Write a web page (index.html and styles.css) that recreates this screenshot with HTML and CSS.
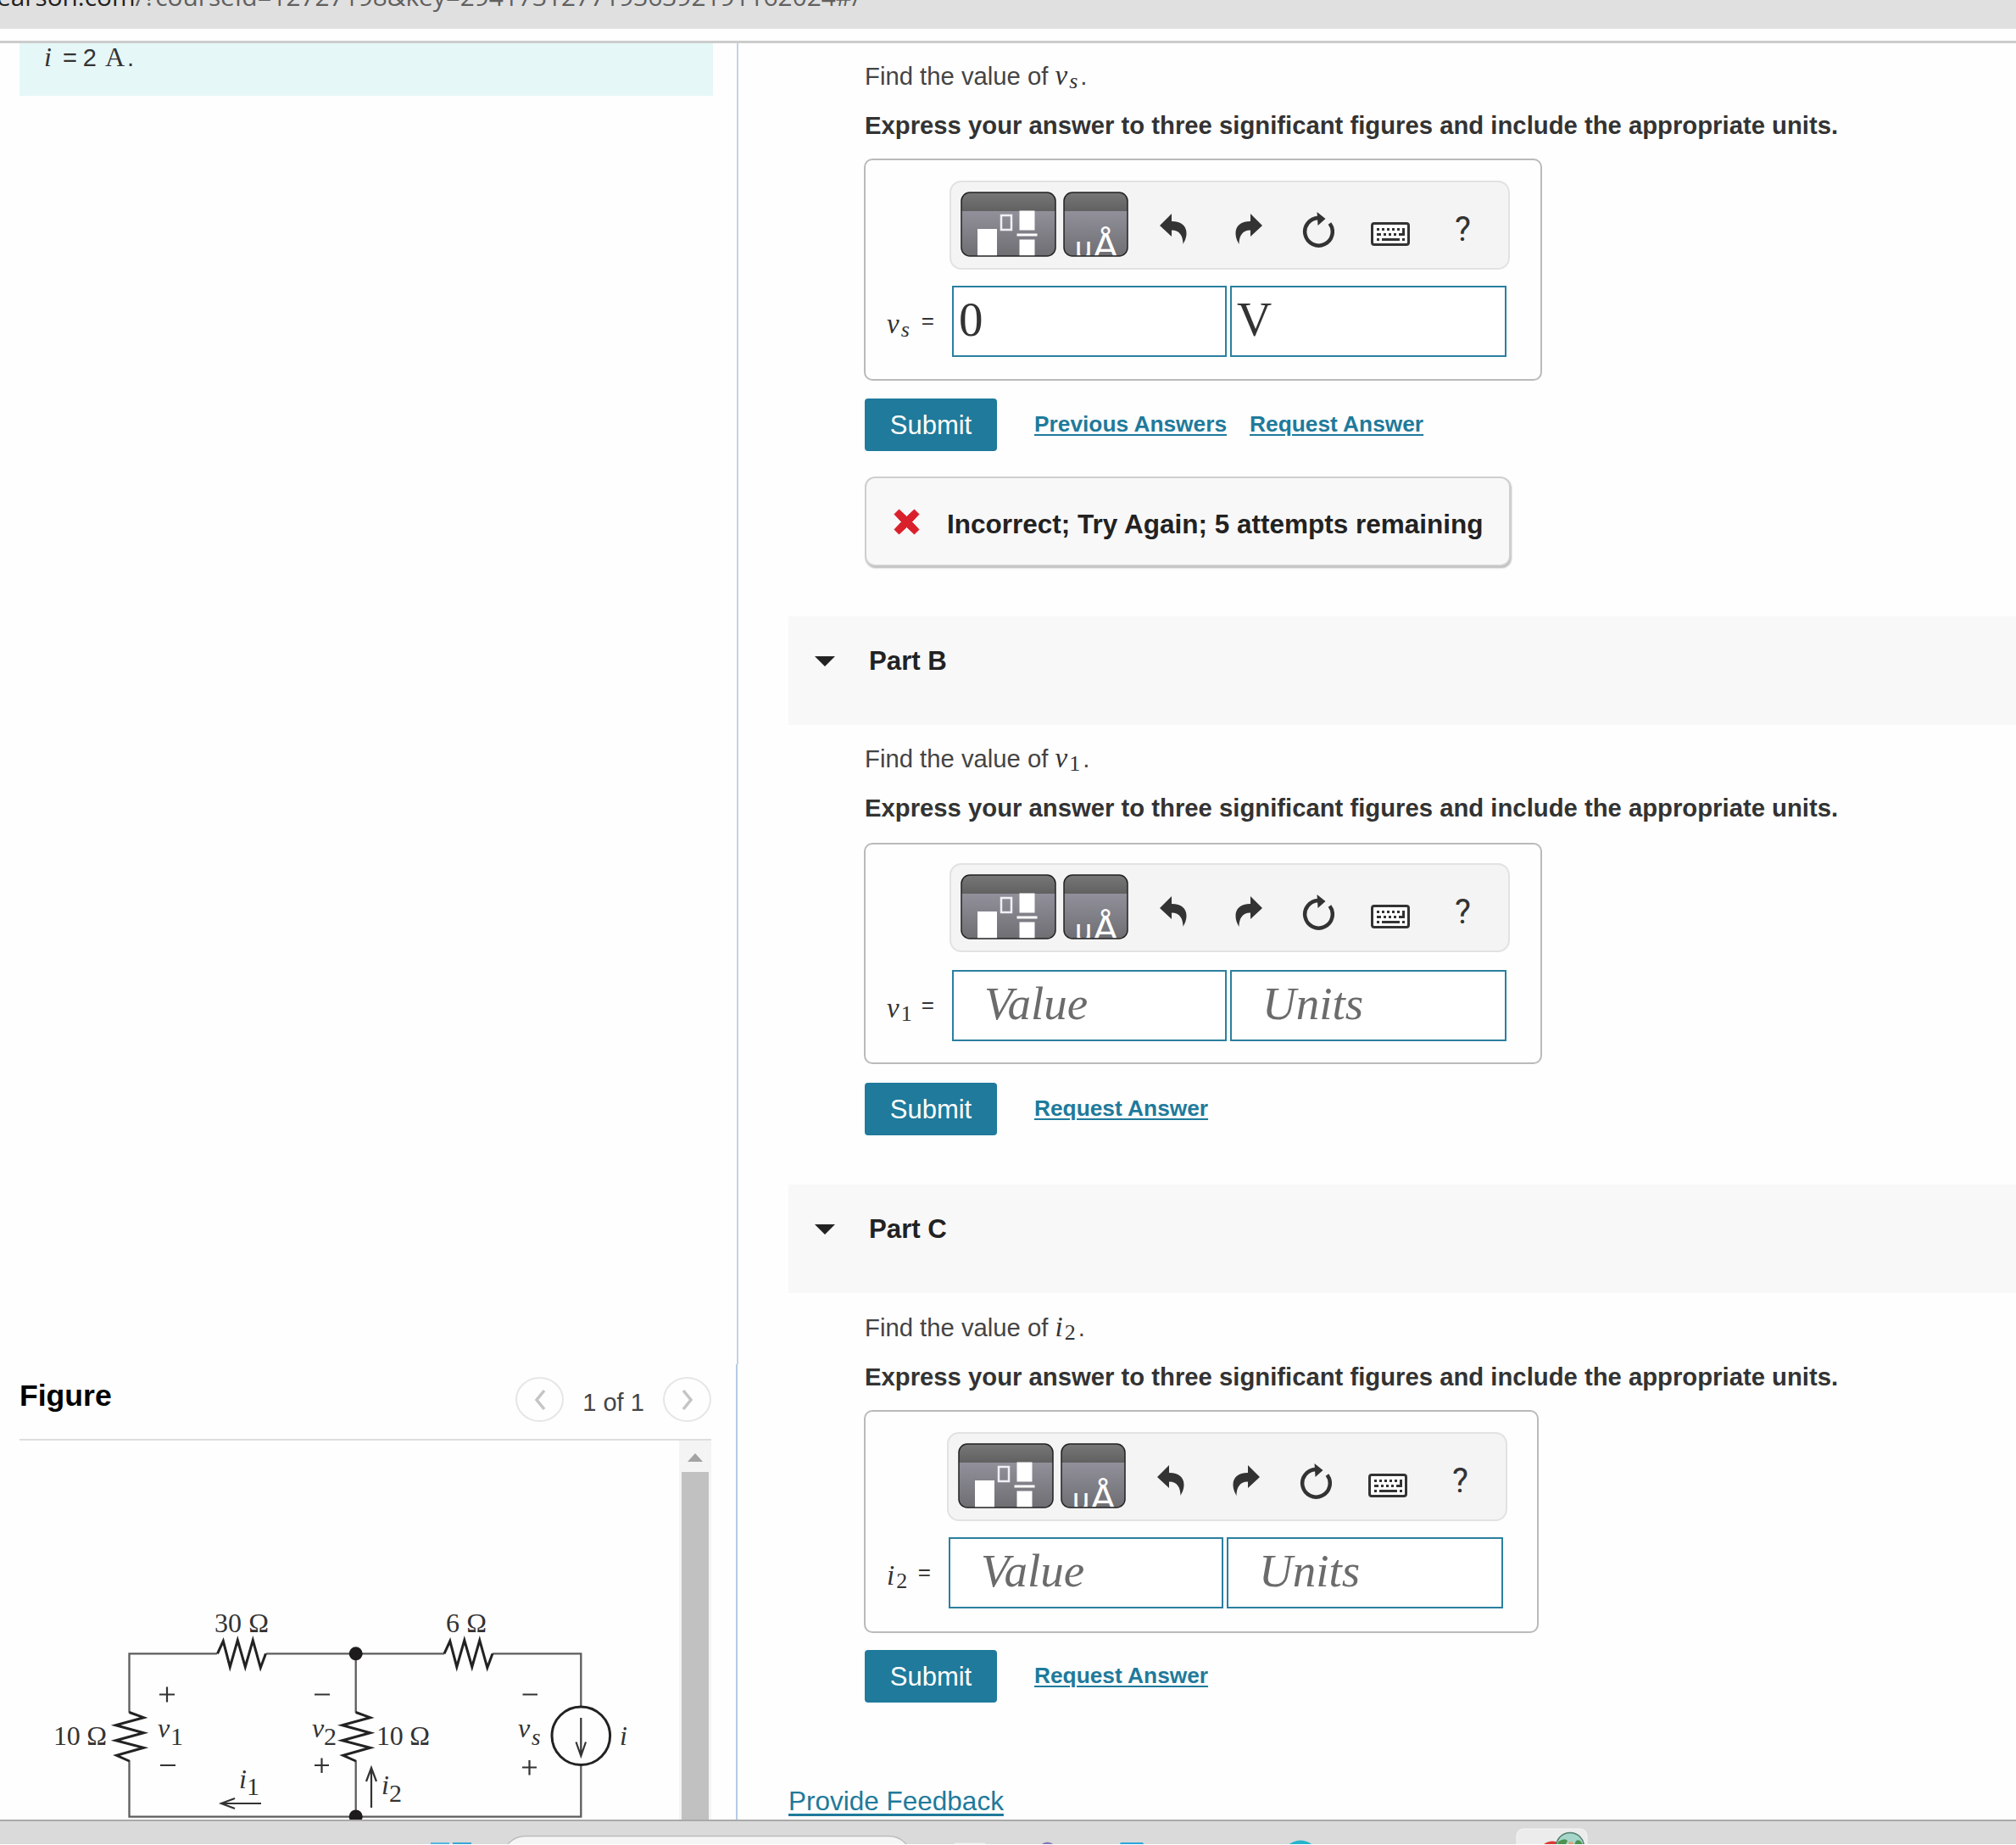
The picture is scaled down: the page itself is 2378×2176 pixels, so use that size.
FILE: index.html
```html
<!DOCTYPE html>
<html lang="en">
<head>
<meta charset="utf-8">
<title>Circuit problem</title>
<link rel="stylesheet" href="styles.css">
</head>
<body>
<svg class="defs" aria-hidden="true">
  <defs>
    <linearGradient id="cap" x1="0" y1="0" x2="0" y2="1"><stop offset="0" stop-color="#777"/><stop offset="1" stop-color="#616161"/></linearGradient>
    <linearGradient id="face" x1="0" y1="0" x2="0" y2="1"><stop offset="0" stop-color="#a09fab"/><stop offset="1" stop-color="#6e6e73"/></linearGradient>
  </defs>
  <symbol id="templates" viewBox="0 0 113 77">
    <rect x="1" y="1" width="111" height="75" rx="10" fill="url(#face)"/>
    <path d="M1 23V11A10 10 0 0 1 11 1H102A10 10 0 0 1 112 11V23Z" fill="url(#cap)"/>
    <path d="M20 44H43V76H20ZM69.500 22.500H87.500V45.500H69.500ZM69.500 56.500H87.500V76H69.500ZM66.500 49.500H90.500V52.500H66.500Z" fill="#fff"/>
    <rect x="48" y="28" width="12" height="17" fill="none" stroke="#f0eff5" stroke-width="2.500"/>
    <rect x="1" y="1" width="111" height="75" rx="10" fill="none" stroke="#222" stroke-width="1.500"/>
  </symbol>
  <symbol id="units" viewBox="0 0 77 77">
    <rect x="1" y="1" width="75" height="75" rx="10" fill="url(#face)"/>
    <path d="M1 23V11A10 10 0 0 1 11 1H66A10 10 0 0 1 76 11V23Z" fill="url(#cap)"/>
    <svg x="0" y="0" width="77" height="75.500">
      <text x="14" y="79" class="unit-glyph" font-size="36">µ</text>
      <text x="35" y="80" class="unit-glyph" font-size="45">Å</text>
    </svg>
    <rect x="1" y="1" width="75" height="75" rx="10" fill="none" stroke="#222" stroke-width="1.500"/>
  </symbol>
  <symbol id="undo" viewBox="0 0 32 36">
    <path d="M0 14 14 0V9C26 9 31.500 15 31.500 23C31.500 29 29 33 27.500 36C27.500 27 24 19.500 14 19.500V27Z" fill="#333"/>
  </symbol>
  <symbol id="redo" viewBox="0 0 32 36">
    <path d="M32 14 18 0V9C6 9 .5 15 .5 23C.5 29 3 33 4.500 36C4.500 27 8 19.500 18 19.500V27Z" fill="#333"/>
  </symbol>
  <symbol id="reset" viewBox="0 0 38 42">
    <path d="M32.500 13.500A16.300 16.300 0 1 1 19 7" fill="none" stroke="#333" stroke-width="4.500"/>
    <path d="M17.500 0 27.500 8 18.500 16Z" fill="#333"/>
  </symbol>
  <symbol id="keyboard" viewBox="0 0 46 28">
    <rect x="1.500" y="1.500" width="43" height="25" rx="2.500" fill="#fff" stroke="#333" stroke-width="3"/>
    <path d="M7 8.500H34" fill="none" stroke="#333" stroke-width="3" stroke-dasharray="3 3"/>
    <path d="M7 14.500H12M15 14.500H18M21 14.500H24M27 14.500H30M33 14.500H39M7 20.500H10M13 20.500H34M37 20.500H40M38.500 7V16" fill="none" stroke="#333" stroke-width="3"/>
  </symbol>
</svg>

<header class="address"><span class="host">earson.com</span><span class="path">/?courseId=12727198&amp;key=29417312771936392191162024#/</span></header>

<div class="page">
  <aside class="left">
    <div class="intro">
      <div class="given"><i>i</i><span class="g-eq">=</span><span class="g-num">2</span><span class="g-unit">A</span><span class="g-dot">.</span></div>
    </div>
    <section class="figure">
      <div class="figure-head">
        <h2>Figure</h2>
        <div class="pager">
          <span class="round"><svg width="14" height="26" viewBox="0 0 14 26"><path d="M12 2 3 13 12 24" fill="none" stroke="#c4c4c4" stroke-width="3.500"/></svg></span>
          <span class="count">1 of 1</span>
          <span class="round"><svg width="14" height="26" viewBox="0 0 14 26"><path d="M2 2 11 13 2 24" fill="none" stroke="#c4c4c4" stroke-width="3.500"/></svg></span>
        </div>
      </div>
      <div class="figure-body">
        <svg class="circuit" width="778" height="448" viewBox="23 1699 778 448">
          <g fill="none" stroke="#5c5c5c" stroke-width="2.300">
            <path d="M256 1950.300H152.500V2020M152.500 2076V2142.700H685.300V2082M685.300 2013V1950.300H581M314 1950.300H524M419.700 1950V2020M419.700 2076V2143"/>
          </g>
          <g fill="none" stroke="#222" stroke-width="3">
            <path id="rh" d="M256.500 1950.300 263.300 1935.500 271.300 1966 280.300 1934.500 289.300 1966 298.300 1934.500 307.300 1967 313.500 1950.300"/>
            <use href="#rh" x="267.500"/>
            <path id="rv" d="M152.500 2019.500 169.500 2025.700 136.500 2034.700 169.500 2043.700 136.500 2052.700 169.500 2061.300 137.500 2070.300 152.500 2077"/>
            <use href="#rv" x="267.200"/>
            <circle cx="685.300" cy="2047.300" r="34.300"/>
          </g>
          <g fill="#1d1b1c"><circle cx="419.700" cy="1950.300" r="8"/><circle cx="419.700" cy="2142.500" r="8"/></g>
          <g fill="none" stroke="#333" stroke-width="2.200">
            <path d="M685.300 2026V2070M679.500 2054.500 685.300 2071 691 2054.500M685.300 2060V2070"/>
            <path d="M308 2127H262M277 2121 261 2127 277 2133"/>
            <path d="M438 2132V2086M432 2101 438 2085 444 2101"/>
            <path d="M188 1998.500H206M197 1989.500V2007.500M189 2082H207M371 1998.500H389M371 2082H388M379.500 2073.500V2091M616.500 1998.500H634M616 2084.500H633M624.500 2076V2093.500"/>
          </g>
          <g class="circuit-text">
            <text x="253" y="1925" textLength="64">30 Ω</text>
            <text x="526" y="1925" textLength="48">6 Ω</text>
            <text x="63" y="2058" textLength="63">10 Ω</text>
            <text x="444" y="2058" textLength="63">10 Ω</text>
            <text x="186" y="2049"><tspan class="it">v</tspan><tspan x="201" y="2057.500" font-size="30">1</tspan></text>
            <text x="368" y="2049"><tspan class="it">v</tspan><tspan x="382" y="2057.500" font-size="30">2</tspan></text>
            <text x="611" y="2049"><tspan class="it">v</tspan><tspan x="627" y="2057.500" class="it" font-size="27">s</tspan></text>
            <text x="282" y="2109"><tspan class="it">i</tspan><tspan x="291" y="2116.500" font-size="30">1</tspan></text>
            <text x="450" y="2116"><tspan class="it">i</tspan><tspan x="459" y="2125" font-size="30">2</tspan></text>
            <text x="731" y="2057.500" class="it">i</text>
          </g>
        </svg>
        <div class="scrollbar"><span class="up"></span><span class="thumb"></span></div>
      </div>
    </section>
  </aside>

  <main class="right">
    <section class="part part-a">
      <p class="ask">Find the value of <span class="math"><i>v</i><sub><i>s</i></sub></span>.</p>
      <p class="express">Express your answer to three significant figures and include the appropriate units.</p>
      <div class="answer">
        <div class="toolbar">
          <svg width="113" height="77"><use href="#templates"/></svg><svg class="t-units" width="77" height="77"><use href="#units"/></svg><svg class="t-undo" width="32" height="36"><use href="#undo"/></svg><svg class="t-redo" width="32" height="36"><use href="#redo"/></svg><svg class="t-reset" width="38" height="42"><use href="#reset"/></svg><svg class="t-keys" width="46" height="28"><use href="#keyboard"/></svg><span class="help">?</span>
        </div>
        <div class="entry"><label><span class="math"><i>v</i><sub><i>s</i></sub></span><span class="eq">=</span></label><div class="field">0</div><div class="field units">V</div></div>
      </div>
      <div class="actions"><span class="submit">Submit</span><a class="link">Previous Answers</a><a class="link">Request Answer</a></div>
      <div class="result"><svg width="31" height="31" viewBox="0 0 31 31"><path d="M6.500 1 15.500 9.500 24.500 1 30 6.500 21.500 15.500 30 24.500 24.500 30 15.500 21.500 6.500 30 1 24.500 9.500 15.500 1 6.500Z" fill="#d9202b" stroke="#d9202b" stroke-width="1" stroke-linejoin="round"/></svg><span>Incorrect; Try Again; 5 attempts remaining</span></div>
    </section>

    <div class="part-head"><span class="caret"></span><h3>Part B</h3></div>
    <section class="part part-b">
      <p class="ask">Find the value of <span class="math"><i>v</i><sub>1</sub></span>.</p>
      <p class="express">Express your answer to three significant figures and include the appropriate units.</p>
      <div class="answer">
        <div class="toolbar">
          <svg width="113" height="77"><use href="#templates"/></svg><svg class="t-units" width="77" height="77"><use href="#units"/></svg><svg class="t-undo" width="32" height="36"><use href="#undo"/></svg><svg class="t-redo" width="32" height="36"><use href="#redo"/></svg><svg class="t-reset" width="38" height="42"><use href="#reset"/></svg><svg class="t-keys" width="46" height="28"><use href="#keyboard"/></svg><span class="help">?</span>
        </div>
        <div class="entry"><label><span class="math"><i>v</i><sub>1</sub></span><span class="eq">=</span></label><div class="field hint">Value</div><div class="field units hint">Units</div></div>
      </div>
      <div class="actions"><span class="submit">Submit</span><a class="link">Request Answer</a></div>
    </section>

    <div class="part-head"><span class="caret"></span><h3>Part C</h3></div>
    <section class="part part-c">
      <p class="ask">Find the value of <span class="math"><i>i</i><sub>2</sub></span>.</p>
      <p class="express">Express your answer to three significant figures and include the appropriate units.</p>
      <div class="answer">
        <div class="toolbar">
          <svg width="113" height="77"><use href="#templates"/></svg><svg class="t-units" width="77" height="77"><use href="#units"/></svg><svg class="t-undo" width="32" height="36"><use href="#undo"/></svg><svg class="t-redo" width="32" height="36"><use href="#redo"/></svg><svg class="t-reset" width="38" height="42"><use href="#reset"/></svg><svg class="t-keys" width="46" height="28"><use href="#keyboard"/></svg><span class="help">?</span>
        </div>
        <div class="entry"><label><span class="math"><i>i</i><sub>2</sub></span><span class="eq">=</span></label><div class="field hint">Value</div><div class="field units hint">Units</div></div>
      </div>
      <div class="actions"><span class="submit">Submit</span><a class="link">Request Answer</a></div>
    </section>
    <a class="feedback">Provide Feedback</a>
  </main>
</div>

<footer class="taskbar">
  <svg width="2378" height="27" viewBox="0 2149 2378 27">
    <rect x="508" y="2174" width="22" height="4" fill="#55b5dc"/><rect x="534" y="2174" width="22" height="4" fill="#3aa6d4"/>
    <rect x="592" y="2166.500" width="484" height="60" rx="28" fill="#f5f5f5" stroke="#bdbdbd" stroke-width="1.500"/>
    <rect x="1125" y="2174.500" width="38" height="6" rx="2" fill="#eee"/>
    <circle cx="1235.500" cy="2184" r="10.500" fill="#8577b8"/>
    <rect x="1321" y="2174" width="28" height="6" rx="2" fill="#2ba6dc"/>
    <circle cx="1534" cy="2193" r="21.500" fill="#27b5cc"/>
    <rect x="1789" y="2158" width="83" height="30" rx="8" fill="#ececec" stroke="#f5f5f5" stroke-width="1"/>
    <circle cx="1831" cy="2188" r="15.500" fill="#d93a32"/>
    <circle cx="1852" cy="2179" r="16.500" fill="#a5d6c9" stroke="#557f70" stroke-width="1.500"/>
    <path d="M1838 2173Q1846 2168 1849 2172L1846 2178H1837ZM1859 2172Q1864 2169 1867 2177H1857Z" fill="#4c9250"/>
    <circle cx="1853" cy="2176" r="3" fill="#e0a07a"/>
  </svg>
</footer>
</body>
</html>
```
FILE: styles.css
```css
* { box-sizing: border-box; }
html, body { margin: 0; padding: 0; }
body {
  width: 2378px;
  height: 2176px;
  overflow: hidden;
  background: #fefefe;
  color: #333;
  font-family: "Liberation Sans", Arial, sans-serif;
  display: flex;
  flex-direction: column;
}
.defs { position: absolute; width: 0; height: 0; }
svg { display: block; flex: none; }
p, h2, h3 { margin: 0; }

.address {
  flex: none;
  height: 34px;
  background: #e0e0e0;
  font: 29.800px/36px "Open Sans", "Noto Sans", sans-serif;
  white-space: nowrap;
  display: flex;
  align-items: flex-start;
}
.address span { margin-top: -22px; }
.host { color: #222; margin-left: -4px; }
.path { color: #606060; }

.page {
  flex: none;
  height: 2112px;
  margin-top: 14px;
  margin-bottom: -14px;
  border-top: 3px solid #ccc;
  display: grid;
  grid-template-columns: 871px 1fr;
  overflow: hidden;
}

.left {
  display: flex;
  flex-direction: column;
  height: 2096px;
}
.intro { flex: 1; border-right: 2px solid #c6d3e2; }
.given {
  width: 818px;
  height: 62px;
  margin-left: 23px;
  padding-left: 29px;
  background: #e6f7f8;
  font-size: 29px;
  line-height: 32px;
  display: flex;
  align-items: baseline;
}
.given i, .g-unit { font-family: "Liberation Serif", serif; font-size: 32px; line-height: 32px; }
.g-eq { margin-left: 13px; }
.g-num { margin-left: 7px; }
.g-unit { margin-left: 10px; }
.g-dot { margin-left: 3px; }

.figure {
  flex: none;
  height: 538px;
  margin-right: 1px;
  border-right: 2px solid #b5cbe2;
  padding-left: 23px;
}
.figure-head {
  width: 816px;
  height: 90px;
  border-bottom: 2px solid #dedede;
  display: flex;
  justify-content: space-between;
}
.figure-head h2 { color: #000; font-size: 35.600px; line-height: 40px; padding-top: 17px; }
.pager { display: flex; padding-top: 15px; }
.round {
  width: 57px;
  height: 53px;
  border: 2px solid #e6e6e6;
  border-radius: 50%;
  display: flex;
  align-items: center;
  justify-content: center;
}
.count { width: 117px; text-align: center; font-size: 29px; line-height: 40px; padding-top: 10px; color: #444; }
.figure-body { display: flex; height: 448px; width: 816px; overflow: hidden; }
.scrollbar {
  width: 38px;
  background: #f4f4f4;
  display: flex;
  flex-direction: column;
  align-items: center;
}
.up {
  margin: 15px 0 12px;
  border: 9px solid transparent;
  border-top: 0;
  border-bottom: 10px solid #a3a3a3;
}
.thumb { flex: 1; width: 32px; background: #c1c1c1; }
.circuit-text { font-family: "Liberation Serif", serif; font-size: 32px; fill: #333; }
.it { font-style: italic; }

.right { padding: 19px 0 0 59px; }
.part { padding-left: 90px; }
.ask, .express { font-size: 29.280px; line-height: 40px; height: 40px; white-space: nowrap; }
.ask { color: #444; }
.express { font-weight: bold; margin-top: 18px; }
.math { font-family: "Liberation Serif", serif; font-size: 33px; line-height: 1; color: #333; padding-right: 3px; }
.math sub { font-size: 26px; vertical-align: -4px; line-height: 0; margin-left: 2px; }

.answer {
  margin: 19px 0 0 -1px;
  width: 800px;
  height: 262px;
  border: 2px solid #bababa;
  border-radius: 10px;
  padding: 24px 0 0 22px;
}
.toolbar {
  width: 661px;
  height: 105px;
  margin-left: 77px;
  border: 2px solid #e2e2e2;
  border-radius: 14px;
  background: #f4f4f4;
  padding: 11px 0 0 11px;
  display: flex;
  align-items: flex-start;
}
.t-units { margin-left: 8px; }
.t-undo { margin: 26px 0 0 37px; }
.t-redo { margin: 26px 0 0 57px; }
.t-reset { margin: 24px 0 0 47px; }
.t-keys { margin: 36px 0 0 43px; }
.help { margin: 23px 0 0 53px; font: 40px/44px Roboto, sans-serif; color: #333; }
.unit-glyph { font-family: "Liberation Sans", sans-serif; fill: #fff; }

.entry { display: flex; gap: 4px; margin-top: 19px; height: 84px; }
.entry label { width: 76px; padding: 24px 0 0 3px; line-height: 40px; white-space: nowrap; display: flex; justify-content: space-between; }
.entry label .math { line-height: 42px; }
.eq { font-size: 26px; line-height: 34px; padding-right: 17px; }
.field {
  width: 324px;
  height: 84px;
  border: 2px solid #2b7f9f;
  background: #fff;
  padding-left: 6px;
  font: 57px/76px "Liberation Serif", serif;
}
.field.units { width: 326px; }
.field.hint { font-style: italic; font-size: 55px; color: #6b6b6b; padding-left: 36px; }

.actions { display: flex; margin-top: 21px; height: 62px; }
.submit {
  width: 156px;
  background: #1f7a9b;
  border-radius: 4px;
  color: #fff;
  font-size: 31px;
  line-height: 64px;
  text-align: center;
}
.link {
  margin-left: 44px;
  font-size: 26.300px;
  font-weight: bold;
  line-height: 60px;
  color: #1f7a9b;
  text-decoration: underline;
  text-decoration-thickness: 2px;
  text-underline-offset: 3px;
}
.link + .link { margin-left: 27px; }
.result {
  margin-top: 30px;
  width: 762px;
  height: 106px;
  border: 2px solid #cfcfcf;
  border-radius: 12px;
  background: #f8f8f8;
  box-shadow: 1px 2px 2px #bbb;
  display: flex;
  padding: 36px 0 0 32px;
  color: #222;
  font-size: 31.500px;
  font-weight: bold;
  line-height: 36px;
  white-space: nowrap;
}
.result span { margin-left: 32px; }

.part-head {
  height: 128px;
  margin-top: 59px;
  background: #f8f8f8;
  display: flex;
  padding: 33px 0 0 31px;
  color: #222;
}
.caret { margin-top: 14px; height: 0; border: 12px solid transparent; border-top: 12px solid #222; border-bottom: 0; }
.part-head h3 { margin-left: 40px; font-size: 31.200px; line-height: 40px; }

.part-b { padding-top: 20px; }
.part-b .answer { margin-top: 21px; height: 261px; padding-top: 22px; }
.part-b .entry { margin-top: 21px; }
.part-b .actions { margin-top: 22px; }
.part-b + .part-head { margin-top: 58px; }
.part-c { padding-top: 21px; }
.part-c .answer { width: 796px; height: 263px; }
.part-c .toolbar { margin-left: 74px; }
.part-c .entry label { width: 72px; }
.part-c .entry { margin-top: 19px; }
.part-c .actions { margin-top: 20px; }

.feedback {
  display: inline-block;
  margin-top: 96px;
  font-size: 31.500px;
  line-height: 40px;
  color: #1f7a9b;
  text-decoration: underline;
  text-decoration-thickness: 2.500px;
  text-underline-offset: 3.500px;
}

.taskbar {
  position: relative;
  flex: none;
  height: 29px;
  border-top: 2px solid #a9a9a9;
  background: #dadada;
}
```
